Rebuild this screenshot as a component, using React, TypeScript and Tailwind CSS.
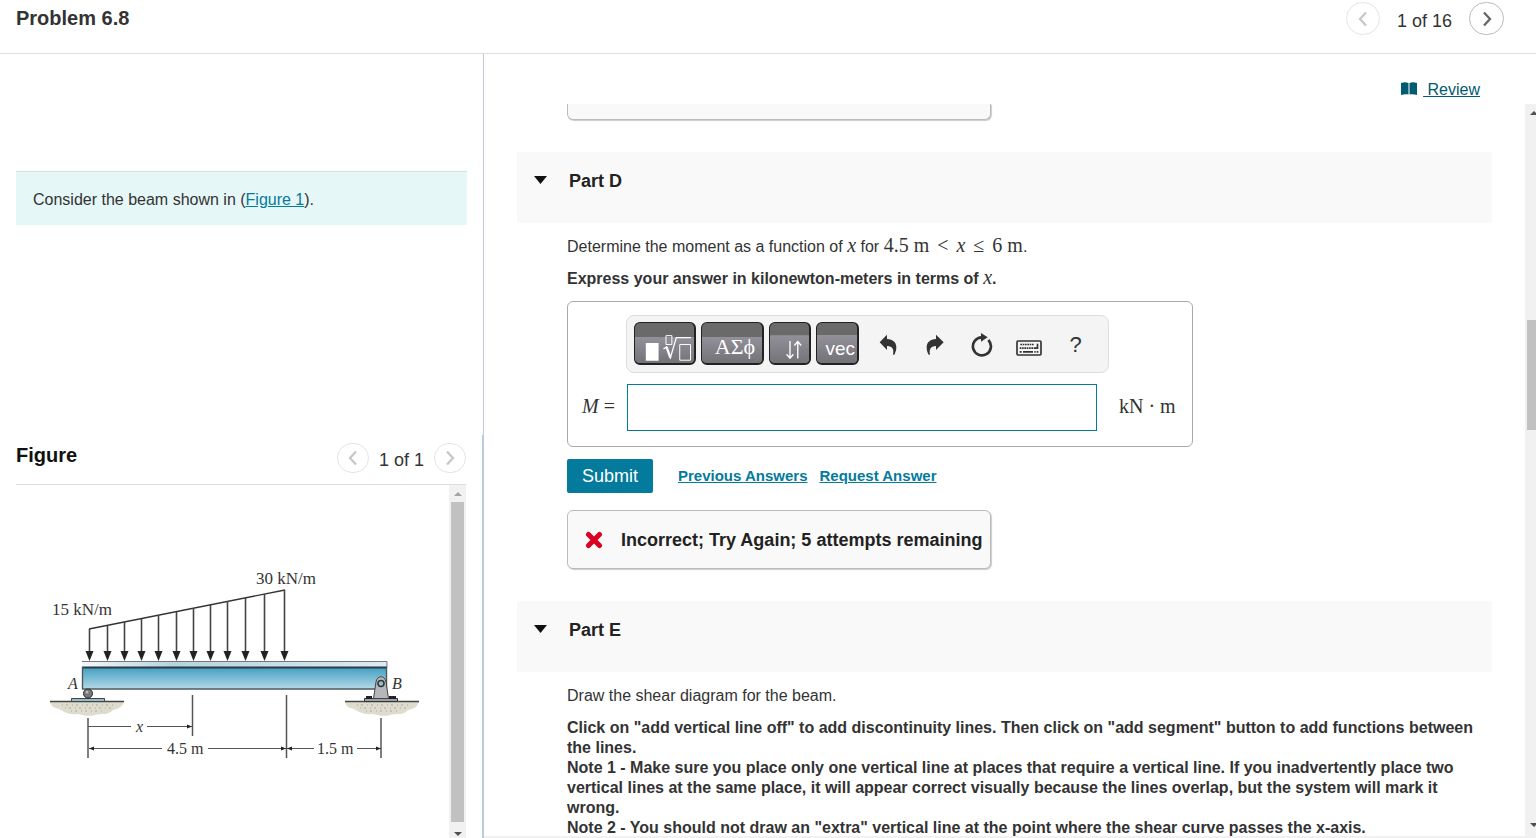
import { ReactNode } from "react";

const arrows = [
  [89, 629],
  [107, 626],
  [124, 622],
  [141, 619],
  [158, 615],
  [176, 612],
  [193, 608],
  [210, 605],
  [227, 601],
  [245, 598],
  [264, 594],
  [284, 590],
];

const keys = [479, 486, 493, 500, 507, 514];

function Chevron({ left, className }: { left?: boolean; className?: string }) {
  return (
    <svg width="12" height="16" viewBox="0 0 12 16" className={className}>
      <path
        d={left ? "M9 1.5 3 8l6 6.5" : "M3 1.5 9 8l-6 6.5"}
        fill="none"
        stroke="currentColor"
        strokeWidth="2.3"
      />
    </svg>
  );
}

function Math({ children }: { children: ReactNode }) {
  return (
    <span className="font-['Liberation_Serif',serif] text-[20px] leading-3 font-normal">
      {children}
    </span>
  );
}

function Triangle({ down, className }: { down?: boolean; className?: string }) {
  return (
    <svg width="8" height="4" viewBox="0 0 8 4" className={className}>
      <path d={down ? "M0 0h8L4 4z" : "M0 4h8L4 0z"} fill="currentColor" />
    </svg>
  );
}

function PartHeader({ title }: { title: string }) {
  return (
    <button
      type="button"
      aria-expanded="true"
      className="flex h-[71px] w-full shrink-0 items-start bg-[#f9f9f9] pt-[18px] pl-4 text-left"
    >
      <svg width="15" height="8" viewBox="0 0 15 8" className="mt-1.5 mr-[21px]">
        <path d="M1 0h13L7.500 8z" fill="#111" />
      </svg>
      <h2 className="text-[18px] leading-[22px] font-bold text-[#222]">{title}</h2>
    </button>
  );
}

function ToolButton({
  label,
  className,
  children,
}: {
  label: string;
  className: string;
  children: ReactNode;
}) {
  return (
    <button
      type="button"
      aria-label={label}
      className={`flex h-[43px] shrink-0 overflow-hidden rounded-md border border-r-2 border-b-2 border-[#222] bg-[#6a6a6a] text-white ${className}`}
    >
      {children}
    </button>
  );
}

function IconButton({ label, children }: { label: string; children: ReactNode }) {
  return (
    <button
      type="button"
      aria-label={label}
      className="flex h-[45px] w-[47px] items-center justify-center text-[#333]"
    >
      {children}
    </button>
  );
}

function EquationEditor() {
  return (
    <div className="w-[626px] rounded-md border border-[#aaa] pt-[13px] pb-[15px]">
      <div
        role="toolbar"
        aria-label="Equation tools"
        className="ml-[58px] flex h-[58px] w-[483px] items-start gap-[5px] rounded-lg border border-[#ddd] bg-[#f4f4f4] pt-1.5 pl-[7px]"
      >
        <ToolButton label="Templates" className="w-[62px]">
          <svg width="60" height="41" viewBox="0 0 60 41">
            <defs>
              <linearGradient id="shine" x1="0" y1="0" x2="0" y2="1">
                <stop offset="0" stopColor="#92919a" />
                <stop offset="1" stopColor="#737277" />
              </linearGradient>
            </defs>
            <path d="M0 14h60v27H0z" fill="url(#shine)" />
            <path d="M11 20h13v18H11z" fill="#fff" />
            <g fill="none" stroke="#fff">
              <path d="M31.500 12.500h6v9h-6zM45.500 21.500h11v16h-11z" />
              <path d="M29 26l3-2 4 11 6-20.500h15" strokeWidth="1.300" />
              <path d="M32 24l4 11" strokeWidth="2.300" />
            </g>
          </svg>
        </ToolButton>
        <ToolButton label="Greek letters" className="w-[63px] flex-col">
          <span className="mt-3.5 flex w-full flex-1 items-center justify-center bg-linear-to-b from-[#92919a] to-[#737277] pb-1.5 pl-1.5 font-['Liberation_Serif',serif] text-[22px] leading-5">
            ΑΣϕ
          </span>
        </ToolButton>
        <ToolButton label="Subscripts and arrows" className="w-[42px]">
          <svg width="40" height="41" viewBox="0 0 40 41">
            <path d="M0 12h40v29H0z" fill="url(#shine)" />
            <path
              d="M20.500 18v17M17 31.500l3.500 4 3.500-4M28.500 36V19M25 22.500l3.500-4 3.500 4"
              fill="none"
              stroke="#fff"
              strokeWidth="1.400"
            />
          </svg>
        </ToolButton>
        <ToolButton label="Vectors" className="w-[43px] flex-col">
          <span className="mt-3 flex w-full flex-1 items-center justify-end bg-linear-to-b from-[#92919a] to-[#737277] pr-0.5 text-[19px] leading-5">
            vec
          </span>
        </ToolButton>
        <div className="flex">
          <IconButton label="Undo">
            <svg width="18" height="21" viewBox="54 104 54 63">
              <path
                d="M56 129 78 106v13c18 1 28 10 28 25 0 9-3 16-6 22h-4c3-16 0-25-18-26v12z"
                fill="currentColor"
              />
            </svg>
          </IconButton>
          <IconButton label="Redo">
            <svg width="18" height="21" viewBox="201 104 54 63">
              <path
                d="M254 129 231 106v13c-18 1-28 10-28 25 0 9 2 16 6 22h4c-3-16 1-25 18-26v12z"
                fill="currentColor"
              />
            </svg>
          </IconButton>
          <IconButton label="Reset">
            <svg width="22" height="24" viewBox="332 101 66 72">
              <path
                d="M384 122A27 27 0 1 1 364 114"
                fill="none"
                stroke="currentColor"
                strokeWidth="8"
              />
              <path d="M362 101 382 114 362 127z" fill="currentColor" />
            </svg>
          </IconButton>
          <IconButton label="Keyboard shortcuts">
            <svg width="26" height="16" viewBox="466 122 78 48" className="mt-1.5">
              <rect
                x="469"
                y="125"
                width="72"
                height="42"
                rx="3"
                fill="none"
                stroke="currentColor"
                strokeWidth="5"
              />
              <g fill="currentColor">
                {keys.map((x) => (
                  <path key={x} d={`M${x} 133h5v5h-5zM${x - 2} 144h5v5h-5z`} />
                ))}
                <path d="M528 133h5v16h-14v-5h9zM477 155h6v5h-6zM487 155h30v5h-30zM521 155h4v5h-4zM528 155h5v5h-5z" />
              </g>
            </svg>
          </IconButton>
          <IconButton label="Help">
            <span className="text-[22px] leading-6">?</span>
          </IconButton>
        </div>
      </div>
      <div className="mt-[11px] flex items-center">
        <label htmlFor="moment" className="w-[59px] shrink-0 pl-3.5">
          <Math>
            <i>M</i> =
          </Math>
        </label>
        <input
          id="moment"
          type="text"
          className="h-[47px] w-[470px] border border-[#047a9c] px-2 text-[18px] outline-none"
        />
        <span className="ml-[22px]">
          <Math>kN · m</Math>
        </span>
      </div>
    </div>
  );
}

function Support({ x }: { x: number }) {
  return (
    <g>
      <path
        d={`M${x} 702h74c-2 5-5 7-11 8-5 6-12 3-18 5-6 2-12 0-18-1-8 1-13-2-18-5-5-1-8-3-9-7z`}
        fill="#dddccd"
      />
      <path
        d={`M${x + 12} 705h52M${x + 15} 708h46M${x + 21} 711h34`}
        stroke="#a9a89e"
        strokeDasharray="1 3 2 4"
      />
      <path d={`M${x} 701.500h74`} stroke="#444" strokeWidth="1.500" />
    </g>
  );
}

function BeamFigure() {
  return (
    <svg
      role="img"
      aria-label="Beam with distributed load"
      width="433"
      height="353"
      viewBox="16 485 433 353"
      className="shrink-0"
    >
      <defs>
        <linearGradient id="web" x1="0" y1="0" x2="0" y2="1">
          <stop offset="0" stopColor="#46a0c2" />
          <stop offset="1" stopColor="#b4d9e8" />
        </linearGradient>
        <linearGradient id="flange" x1="0" y1="0" x2="1" y2="0">
          <stop offset="0" stopColor="#f2f7fa" />
          <stop offset="0.3" stopColor="#b5d3e0" />
          <stop offset="1" stopColor="#dcebf3" />
        </linearGradient>
      </defs>

      <path d="M89 629 285 590" stroke="#333" strokeWidth="1.300" />
      {arrows.map(([x, y]) => (
        <g key={x}>
          <path d={`M${x + 0.5} ${y}V655`} stroke="#444" strokeWidth="1.600" />
          <path d={`M${x - 3.5} 651h8l-4 10z`} fill="#222" />
        </g>
      ))}

      <path d="M82 661h305v6H82z" fill="url(#flange)" />
      <path d="M82 661.500h305v6" fill="none" stroke="#777" />
      <path d="M83 668h303v21H83z" fill="url(#web)" />
      <path d="M82 667.500h305" stroke="#2c3a42" strokeWidth="2" />
      <path d="M82.500 667v22M82 689h305M386.500 667v22" stroke="#4d5960" strokeWidth="1.400" />

      <Support x={50} />
      <path d="M71.500 698.500h33v3h-33z" fill="#94bdcf" stroke="#444" />
      <circle cx="88" cy="693.500" r="4.500" fill="#77777c" stroke="#2b2b2b" />
      <circle cx="87" cy="692" r="1.500" fill="#bbb" />

      <Support x={345} />
      <path d="M364.500 698.500h33v3h-33z" fill="#9aa3a8" stroke="#333" />
      <path d="M366 696h6v3h-6zM389 696h7v3h-7z" fill="#222" />
      <path
        d="M373.500 698.500 376 682c1-7 9-7 10 0l2.500 16.500z"
        fill="#b5b7ba"
        stroke="#444"
      />
      <circle cx="381" cy="683.500" r="3" fill="#8fc0d6" stroke="#333" strokeWidth="1.500" />

      <path
        d="M88 718v40M192.500 695v41M286.500 695v63M381 718v40"
        stroke="#555"
        strokeWidth="1.500"
      />
      <path
        d="M88 726.500h43M147 726.500h45M89 748.500h73M208 748.500h78M287 748.500h27M357 748.500h24"
        stroke="#555"
      />
      <path
        d="M192 726.500l-5-2v4zM89 748.500l5-2v4zM286 748.500l-5-2v4zM287 748.500l5-2v4zM381 748.500l-5-2v4z"
        fill="#222"
      />
      <g fill="#333" fontFamily="Liberation Serif, serif" fontSize="16">
        <text x="52" y="615" fontSize="17">15 kN/m</text>
        <text x="256" y="584" fontSize="17">30 kN/m</text>
        <text x="68" y="689" fontStyle="italic">A</text>
        <text x="392" y="689" fontStyle="italic">B</text>
        <text x="136" y="732" fontStyle="italic">x</text>
        <text x="167" y="754">4.5 m</text>
        <text x="317" y="754">1.5 m</text>
      </g>
    </svg>
  );
}

export default function App() {
  return (
    <div className="flex h-screen flex-col overflow-hidden bg-white font-['Liberation_Sans',Arial,sans-serif] text-[16px] leading-5 text-[#333]">
      <header className="flex h-[54px] shrink-0 items-start justify-between border-b border-[#ddd] pl-4 pr-8">
        <h1 className="mt-1.5 text-[20px] leading-6 font-bold">Problem 6.8</h1>
        <nav aria-label="Problems" className="mt-0.5 flex items-center text-[18px]">
          <button
            type="button"
            disabled
            aria-label="Previous problem"
            className="flex h-[33px] w-[34px] items-center justify-center rounded-full border border-[#e4e4e4] text-[#c7c7c7]"
          >
            <Chevron left />
          </button>
          <span className="mt-1 px-[17px]">1 of 16</span>
          <button
            type="button"
            aria-label="Next problem"
            className="flex h-[33px] w-[35px] items-center justify-center rounded-full border border-[#bbb] text-[#666]"
          >
            <Chevron />
          </button>
        </nav>
      </header>

      <div className="flex min-h-0 flex-1">
        <aside className="flex w-[484px] shrink-0 flex-col">
          <div className="h-[381px] shrink-0 border-r border-[#c3cad1] px-4 pt-[117px]">
            <p className="border-t border-[#cfe5e5] bg-[#e6f7f8] px-[17px] pt-[18px] pb-[15px]">
              Consider the beam shown in (
              <a href="#figure" className="text-[#047a9c] underline">
                Figure 1
              </a>
              ).
            </p>
          </div>

          <section id="figure" className="flex min-h-0 flex-1 flex-col border-r-2 border-[#b9cbdf] px-4">
            <div className="flex h-[50px] shrink-0 items-start justify-between border-b border-[#ddd]">
              <h2 className="mt-2 text-[20px] leading-6 font-bold text-[#111]">Figure</h2>
              <nav aria-label="Figures" className="mt-2 flex items-center text-[18px]">
                <button
                  type="button"
                  disabled
                  aria-label="Previous figure"
                  className="flex h-[30px] w-8 items-center justify-center rounded-full border border-[#e4e4e4] text-[#c7c7c7]"
                >
                  <Chevron left />
                </button>
                <span className="mt-1 px-2.5">1 of 1</span>
                <button
                  type="button"
                  disabled
                  aria-label="Next figure"
                  className="flex h-[30px] w-8 items-center justify-center rounded-full border border-[#e4e4e4] text-[#c7c7c7]"
                >
                  <Chevron />
                </button>
              </nav>
            </div>
            <div className="flex min-h-0 flex-1 justify-between overflow-hidden">
              <BeamFigure />
              <div className="flex w-[17px] shrink-0 flex-col items-center bg-[#f1f1f1] pt-[7px] pb-0.5">
                <Triangle className="text-[#a3a3a3]" />
                <div className="my-1.5 w-[13px] flex-1 bg-[#c1c1c1]" />
                <Triangle down className="mt-1 text-[#505050]" />
              </div>
            </div>
          </section>
        </aside>

        <main className="flex min-w-0 flex-1 flex-col">
          <div className="flex h-[50px] shrink-0 justify-end pt-[26px] pr-14">
            <a href="#review" className="flex items-start text-[#005a70]">
              <svg width="16" height="14" viewBox="0 0 16 14" className="mt-0.5 mr-1.5">
                <path
                  d="M0 1c3-1 5-1 7.500 0v11.500C5 12 3 12 0 13zM8.500 1C11 0 13 0 16 1v12c-3-1-5-1-7.500-.5z"
                  fill="currentColor"
                />
              </svg>
              <span className="whitespace-pre underline"> Review</span>
            </a>
          </div>

          <div className="flex min-h-0 flex-1">
            <div className="flex min-w-0 flex-1 flex-col overflow-hidden px-[33px]">
              <div className="ml-[50px] h-4 w-[424px] shrink-0 rounded-b-md border border-t-0 border-[#bbb] bg-[#f9f9f9] shadow-[1px_1px_1px_#ccc]" />

              <section className="mt-8 shrink-0">
                <PartHeader title="Part D" />
                <div className="pt-3.5 pl-[50px]">
                  <p>
                    Determine the moment as a function of{" "}
                    <Math>
                      <i>x</i>
                    </Math>{" "}
                    for{" "}
                    <Math>
                      4.5 m <span className="mx-[3px]">&lt;</span> <i>x</i>{" "}
                      <span className="mx-[3px]">≤</span> 6 m
                    </Math>
                    .
                  </p>
                  <p className="my-3 font-bold">
                    Express your answer in kilonewton-meters in terms of{" "}
                    <Math>
                      <i>x</i>
                    </Math>
                    .
                  </p>
                  <EquationEditor />
                  <div className="mt-3 flex items-center text-[15px] font-bold">
                    <button
                      type="button"
                      className="mr-[25px] h-[34px] w-[86px] rounded-xs bg-[#047a9c] text-[18px] font-normal text-white"
                    >
                      Submit
                    </button>
                    <a href="#previous" className="mr-3 text-[#047a9c] underline">
                      Previous Answers
                    </a>
                    <a href="#request" className="text-[#047a9c] underline">
                      Request Answer
                    </a>
                  </div>
                  <div
                    role="status"
                    className="mt-[17px] flex h-[59px] w-[424px] items-center rounded-md border border-[#bbb] bg-[#f9f9f9] pl-[17px] text-[18px] font-bold text-[#222] shadow-[1px_1px_1px_#ccc]"
                  >
                    <svg width="18" height="18" viewBox="0 0 18 18" className="mr-[18px]">
                      <path
                        d="M3.500 3.500l11 11M14.500 3.500l-11 11"
                        stroke="#db0020"
                        strokeWidth="5"
                        strokeLinecap="round"
                      />
                    </svg>
                    Incorrect; Try Again; 5 attempts remaining
                  </div>
                </div>
              </section>

              <section className="mt-8 shrink-0">
                <PartHeader title="Part E" />
                <div className="pt-3.5 pl-[50px]">
                  <p>Draw the shear diagram for the beam.</p>
                  <p className="mt-3 font-bold">
                    Click on "add vertical line off" to add discontinuity lines. Then click on "add
                    segment" button to add functions between the lines.
                    <br />
                    Note 1 - Make sure you place only one vertical line at places that require a
                    vertical line. If you inadvertently place two vertical lines at the same place,
                    it will appear correct visually because the lines overlap, but the system will
                    mark it wrong.
                    <br />
                    Note 2 - You should not draw an "extra" vertical line at the point where the
                    shear curve passes the x-axis.
                  </p>
                </div>
              </section>
            </div>

            <div className="flex w-[11px] shrink-0 flex-col overflow-hidden bg-[#f1f1f1] pt-[7px] pb-[9px] pl-[2px]">
              <Triangle className="ml-[3px] shrink-0 text-[#505050]" />
              <div className="grow-[206]" />
              <div className="h-[110px] bg-[#c1c1c1]" />
              <div className="grow-[394]" />
              <Triangle down className="ml-[3px] shrink-0 text-[#505050]" />
            </div>
          </div>
          <div className="h-0.5 shrink-0 bg-[#f1f1f1]" />
        </main>
      </div>
    </div>
  );
}
